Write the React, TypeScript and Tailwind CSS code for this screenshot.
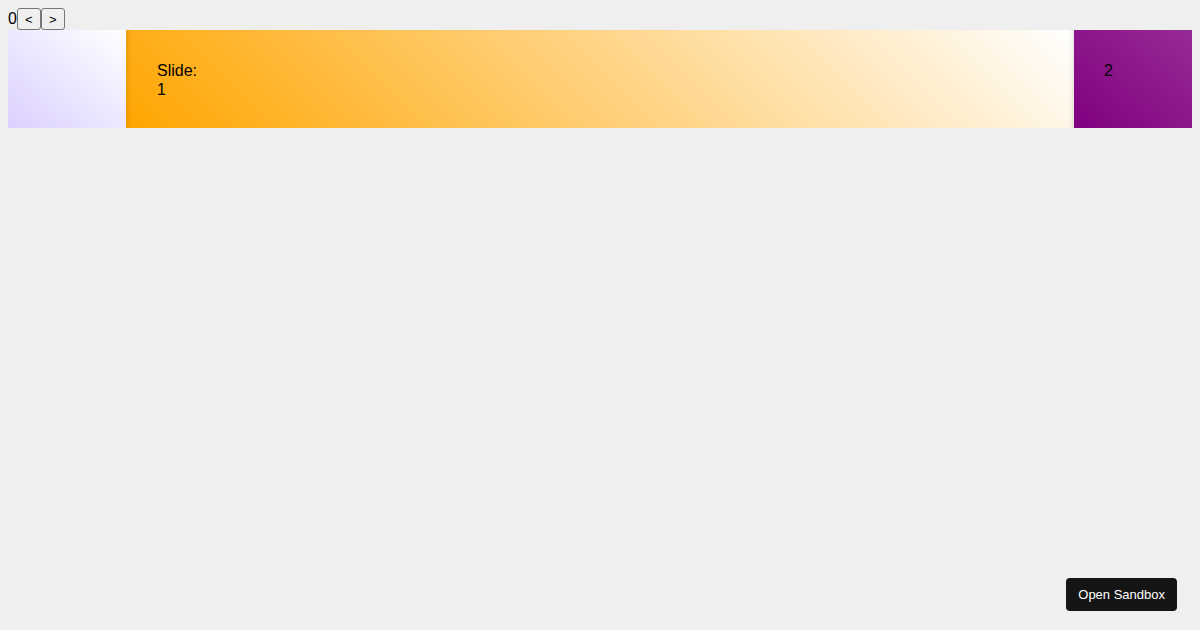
import React from "react";

export default function App() {
  return (
    <div className="min-h-[630px] w-full bg-[#efefef] p-2 text-black font-['Liberation_Sans',Arial,sans-serif] text-base leading-[normal]">
      <div className="flex items-center h-[22px]">
        <span className="leading-none">0</span>
        <button className="h-[22px] w-6 border border-[#767676] rounded-[3px] bg-[#efefef] text-[13px] leading-none flex items-center justify-center">&lt;</button>
        <button className="h-[22px] w-6 border border-[#767676] rounded-[3px] bg-[#efefef] text-[13px] leading-none flex items-center justify-center">&gt;</button>
      </div>
      <div className="flex h-[98px]">
        <div className="w-[118px] shrink-0 bg-[linear-gradient(to_top_right,#dbd0ff,#ffffff)]"></div>
        <div className="flex-1 pl-[31px] pr-[30px] pt-[31px] leading-[19px] bg-[linear-gradient(45deg,#ffa500,#ffffff)] shadow-[inset_5px_0_4px_-3px_rgba(0,0,0,0.1),inset_-5px_0_4px_-3px_rgba(0,0,0,0.1)]">
          <div>Slide:</div>
          <div>1</div>
        </div>
        <div className="w-[118px] shrink-0 px-[30px] pt-[31px] leading-[19px] bg-[linear-gradient(to_top_right,#800080,#962b96)]">
          2
        </div>
      </div>
      <button className="fixed right-[23px] bottom-[19px] h-[33px] px-[12px] rounded-[4px] bg-[#151515] text-white text-[13px] font-['Liberation_Sans',Arial,sans-serif]">
        Open Sandbox
      </button>
    </div>
  );
}
